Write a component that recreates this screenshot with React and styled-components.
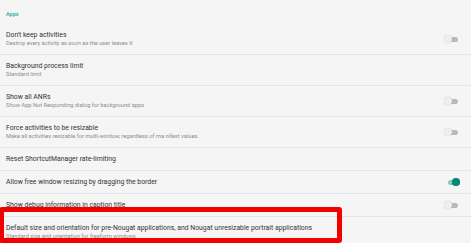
import React from 'react'
import styled, { createGlobalStyle } from 'styled-components'

const Global = createGlobalStyle`
  html, body {
    margin: 0;
    padding: 0;
    background: #ffffff;
  }
  body {
    font-family: Roboto, "Noto Sans", Arial, sans-serif;
  }
`

const Screen = styled.div`
  position: relative;
  width: 471px;
  height: 243px;
  overflow: hidden;
  background: #f5f5f5;
`

const Header = styled.div`
  height: 24px;
  padding-left: 6px;
  font-size: 5.5px;
  line-height: 28px;
  color: #26a69a;
  font-weight: 500;
  box-sizing: border-box;
`

const Row = styled.div`
  display: flex;
  align-items: center;
  justify-content: space-between;
  padding: 7px 11px 7px 6px;
  border-bottom: 1px solid #e4e4e4;
`

const Texts = styled.div`
  display: flex;
  flex-direction: column;
  min-width: 0;
`

const Title = styled.div`
  font-size: 6.85px;
  line-height: 8px;
  color: #333333;
  white-space: nowrap;
`

const Sub = styled.div`
  font-size: 5.7px;
  line-height: 8px;
  color: #8c8c8c;
  white-space: nowrap;
`

const Switch = styled.div`
  position: relative;
  width: 16px;
  height: 8px;
  flex: none;

  &::before {
    content: '';
    position: absolute;
    top: 1.5px;
    left: ${p => (p.$on ? '4px' : '2px')};
    width: 12px;
    height: 5px;
    border-radius: 3px;
    background: ${p => (p.$on ? '#80cbc4' : '#b9b9b9')};
  }

  &::after {
    content: '';
    position: absolute;
    top: 0;
    left: ${p => (p.$on ? '8px' : '0')};
    width: 8px;
    height: 8px;
    border-radius: 50%;
    background: ${p => (p.$on ? '#00897b' : '#eeeeee')};
    box-shadow: 0 0 1px rgba(0, 0, 0, 0.25);
  }
`

const Spacer = styled.div`
  width: 16px;
  height: 8px;
`

const Highlight = styled.div`
  position: absolute;
  left: -1px;
  top: 207px;
  width: 343px;
  height: 36px;
  box-sizing: border-box;
  border: 5px solid #f20000;
  border-radius: 3px;
`

const rows = [
  { title: "Don't keep activities", sub: 'Destroy every activity as soon as the user leaves it', toggle: 'off' },
  { title: 'Background process limit', sub: 'Standard limit' },
  { title: 'Show all ANRs', sub: 'Show App Not Responding dialog for background apps', toggle: 'off' },
  { title: 'Force activities to be resizable', sub: 'Make all activities resizable for multi-window, regardless of ma nifest values.', toggle: 'off' },
  { title: 'Reset ShortcutManager rate-limiting' },
  { title: 'Allow free window resizing by dragging the border', toggle: 'on' },
  { title: 'Show debug information in caption title', toggle: 'off' },
  { title: 'Default size and orientation for pre-Nougat applications, and Nougat unresizable portrait applications', sub: 'Standard size and orientation for freeform windows' },
]

export default function App() {
  return (
    <>
      <Global />
      <Screen>
        <Header>Apps</Header>
        {rows.map(r => (
          <Row key={r.title}>
            <Texts>
              <Title>{r.title}</Title>
              {r.sub && <Sub>{r.sub}</Sub>}
            </Texts>
            {r.toggle ? <Switch $on={r.toggle === 'on'} /> : <Spacer />}
          </Row>
        ))}
        <Highlight />
      </Screen>
    </>
  )
}
